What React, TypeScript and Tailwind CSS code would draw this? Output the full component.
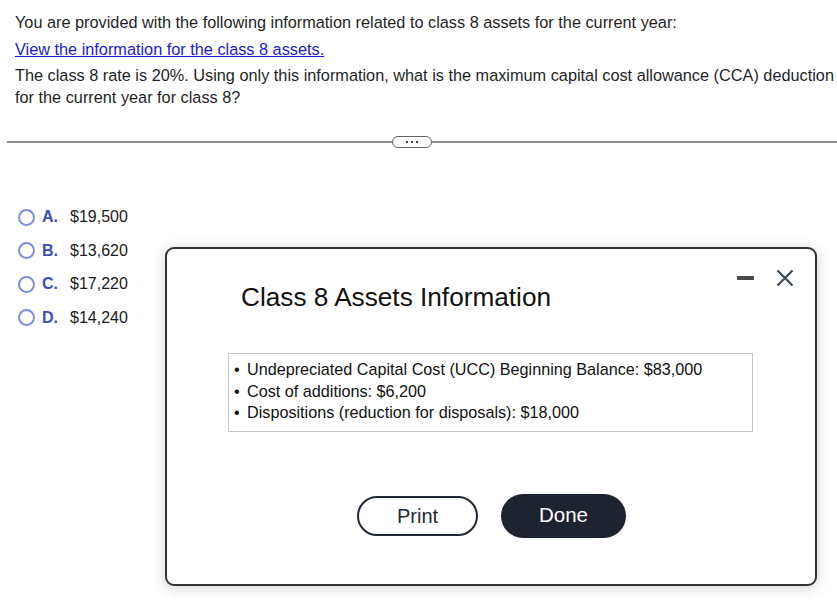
import React from 'react';

const options = [
  { letter: 'A.', value: '$19,500' },
  { letter: 'B.', value: '$13,620' },
  { letter: 'C.', value: '$17,220' },
  { letter: 'D.', value: '$14,240' },
];

const facts = [
  'Undepreciated Capital Cost (UCC) Beginning Balance: $83,000',
  'Cost of additions: $6,200',
  'Dispositions (reduction for disposals): $18,000',
];

function AssetsModal() {
  return (
    <div className="absolute left-[165px] top-[247px] w-[652px] h-[339px] rounded-[9px] border-2 border-[#333333] bg-white shadow-[0_2px_14px_rgba(0,0,0,0.18)]">
      <div className="flex items-start justify-between pl-[74px] pr-[21px] pt-[32px]">
        <h2 className="text-[26.2px] leading-[32px] text-[#111]">Class 8 Assets Information</h2>
        <div className="flex items-center gap-[22px] -mt-[12px]">
          <span className="block w-[17px] h-[4px] bg-[#4a4a4a]" />
          <svg width="18" height="18" viewBox="0 0 18 18" className="text-[#3e4a5b]">
            <path d="M1.5 1.5 L16.5 16.5 M16.5 1.5 L1.5 16.5" stroke="currentColor" strokeWidth="2.2" />
          </svg>
        </div>
      </div>

      <div className="ml-[61px] mt-[40px] w-[525px] border border-[#c4c4c4] px-[5px] pt-[5px] pb-[7px]">
        <ul className="text-[16.2px] leading-[21.5px] text-[#111]">
          {facts.map((f) => (
            <li key={f} className="flex">
              <span className="w-[13px] shrink-0">•</span>
              <span>{f}</span>
            </li>
          ))}
        </ul>
      </div>

      <div className="flex items-center justify-center gap-[23px] mt-[62px] pl-[1px]">
        <button className="w-[121px] h-[40px] rounded-full border-2 border-[#222836] bg-white text-[20px] text-[#222836]">
          Print
        </button>
        <button className="w-[125px] h-[44px] rounded-full bg-[#1e2330] text-[20.5px] text-white">
          Done
        </button>
      </div>
    </div>
  );
}

export default function App() {
  return (
    <div className="relative w-[837px] h-[600px] overflow-hidden bg-white font-['Liberation_Sans',Arial,sans-serif] text-[#1f1f1f]">
      <div className="pl-[15px] pt-[11px] w-[837px] text-[16.3px] leading-[22px]">
        <p>You are provided with the following information related to class 8 assets for the current year:</p>
        <p className="mt-[5px]">
          <a href="#" className="text-[#1a1ad6] underline">View the information for the class 8 assets.</a>
        </p>
        <p className="mt-[4px]">
          The class 8 rate is 20%. Using only this information, what is the maximum capital cost allowance (CCA) deduction for the current year for class 8?
        </p>
      </div>

      <div className="relative mt-[33px] ml-[7px] flex items-center">
        <div className="h-[2px] w-full bg-[#8a8d94]" />
        <div className="absolute left-[385px] top-[-5px] w-[40px] h-[12px] rounded-[6px] border border-[#5f6673] bg-white flex items-center justify-center gap-[3px]">
          <span className="w-[2px] h-[2px] bg-[#3d4451]" />
          <span className="w-[2px] h-[2px] bg-[#3d4451]" />
          <span className="w-[2px] h-[2px] bg-[#3d4451]" />
        </div>
      </div>

      <div className="mt-[64px] pl-[18px] flex flex-col gap-[13.6px]">
        {options.map((o) => (
          <div key={o.letter} className="flex items-center h-[20px] text-[16px]">
            <span className="w-[17px] h-[17px] rounded-full border-2 border-[#7d8fd8] bg-white" />
            <span className="ml-[7px] w-[28px] font-bold text-[#3b4bc4]">{o.letter}</span>
            <span className="text-[#1a1a1a]">{o.value}</span>
          </div>
        ))}
      </div>

      <AssetsModal />
    </div>
  );
}
